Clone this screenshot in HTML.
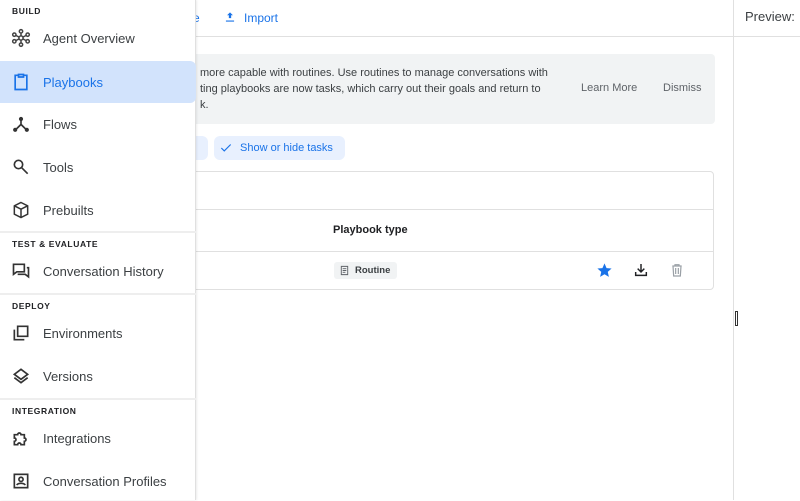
<!DOCTYPE html>
<html><head><style>
*{margin:0;padding:0;box-sizing:border-box}
body{width:800px;height:500px;overflow:hidden;background:#fff;font-family:"Liberation Sans",Arial,sans-serif;position:relative;color:#3c4043}
.abs{position:absolute}
.sb{position:absolute;left:0;top:0;width:196px;height:500px;background:#fff;border-right:1px solid #e0e0e0;box-shadow:1px 0 2px rgba(0,0,0,.08)}
.hd{position:absolute;left:12px;font-size:8.5px;font-weight:bold;letter-spacing:.6px;color:#202124}
.it{position:absolute;left:0;width:196px;height:40px;display:flex;align-items:center}
.it svg{position:absolute;left:11px;width:20px;height:20px}
.it span{position:absolute;left:43px;font-size:13px;color:#3c4043}
.dv{position:absolute;left:0;width:196px;height:2px;background:#eeeeee}
</style></head><body>
<!-- main -->
<div class="abs" style="left:0;top:36px;width:733px;height:1px;background:#e0e0e0"></div>
<div class="abs" style="left:733px;top:0;width:1px;height:500px;background:#e0e0e0"></div>
<div class="abs" style="left:734px;top:36px;width:66px;height:1px;background:#e0e0e0"></div>
<div class="abs" style="left:745px;top:9px;font-size:13px;color:#3c4043">Preview:</div>
<div class="abs" style="left:193px;top:11px;font-size:12px;color:#1a73e8">e</div>
<svg class="abs" style="left:223px;top:10px" width="14" height="14" viewBox="0 0 24 24"><path d="M5 20h14v-2H5zM12 4l-5 5h3v5h4V9h3z" fill="#1a73e8"/></svg>
<div class="abs" style="left:244px;top:11px;font-size:12px;color:#1a73e8">Import</div>
<div class="abs" style="left:190px;top:54px;width:525px;height:70px;background:#f1f3f4;border-radius:4px"></div>
<div class="abs" style="left:200px;top:65px;font-size:11px;line-height:16px;color:#3c4043;width:360px">more capable with routines. Use routines to manage conversations with<br>ting playbooks are now tasks, which carry out their goals and return to<br>k.</div>
<div class="abs" style="left:581px;top:82px;font-size:11px;color:#5f6368">Learn More</div>
<div class="abs" style="left:663px;top:82px;font-size:11px;color:#5f6368">Dismiss</div>
<div class="abs" style="left:190px;top:136px;width:18px;height:24px;background:#e8f0fe;border-radius:6px"></div>
<div class="abs" style="left:214px;top:136px;width:131px;height:24px;background:#e8f0fe;border-radius:6px"></div>
<svg class="abs" style="left:219px;top:141px" width="14" height="14" viewBox="0 0 24 24"><path d="M4 12l5 5L20 6" stroke="#1a73e8" stroke-width="2" fill="none"/></svg>
<div class="abs" style="left:240px;top:142px;font-size:11px;color:#1a73e8">Show or hide tasks</div>
<div class="abs" style="left:185px;top:171px;width:529px;height:119px;border:1px solid #e0e0e0;border-radius:4px"></div>
<div class="abs" style="left:185px;top:209px;width:529px;height:1px;background:#e0e0e0"></div>
<div class="abs" style="left:185px;top:251px;width:529px;height:1px;background:#e0e0e0"></div>
<div class="abs" style="left:333px;top:224px;font-size:11px;font-weight:bold;color:#202124">Playbook type</div>
<div class="abs" style="left:334px;top:262px;width:63px;height:17px;background:#f1f3f4;border-radius:3px"></div>
<svg class="abs" style="left:339px;top:265px" width="11" height="11" viewBox="0 0 24 24"><path d="M5 3h14v18H5zM8 8h8M8 12h8M8 16h6" stroke="#5f6368" stroke-width="2" fill="none"/></svg>
<div class="abs" style="left:355px;top:265px;font-size:9.5px;font-weight:bold;color:#3c4043">Routine</div>
<svg class="abs" style="left:596px;top:262px" width="17" height="17" viewBox="0 0 24 24"><path d="M12 2l2.9 6.6 7.1.6-5.4 4.7 1.6 7.1L12 17.3 5.8 21l1.6-7.1L2 9.2l7.1-.6z" fill="#1a73e8"/></svg>
<svg class="abs" style="left:633px;top:262px" width="16" height="16" viewBox="0 0 24 24"><path d="M12 3v11M7 10l5 5 5-5M4 15v5h16v-5" stroke="#202124" stroke-width="2.2" fill="none"/></svg>
<svg class="abs" style="left:669px;top:262px" width="16" height="16" viewBox="0 0 24 24"><path d="M5 6h14M9 6V4h6v2M6 6l1 15h10l1-15M10 9v9M14 9v9" stroke="#9aa0a6" stroke-width="1.8" fill="none"/></svg>
<div class="abs" style="left:735px;top:311px;width:3px;height:15px;border:1px solid #333"></div>
<!-- sidebar -->
<div class="sb">
<div class="hd" style="top:6px">BUILD</div>
<div class="it" style="top:18px"><svg viewBox="0 0 24 24" fill="none" stroke="#444" stroke-width="1.8"><circle cx="12" cy="12" r="2.5"/><circle cx="12" cy="4" r="2"/><circle cx="12" cy="20" r="2"/><circle cx="4" cy="8" r="2"/><circle cx="20" cy="8" r="2"/><circle cx="4" cy="16" r="2"/><circle cx="20" cy="16" r="2"/><path d="M12 6v4M12 14v4M6 9l4 2M18 9l-4 2M6 15l4-2M18 15l-4-2"/></svg><span>Agent Overview</span></div>
<div class="abs" style="left:0;top:61px;width:196px;height:42px;background:#d2e3fc;border-radius:0 6px 6px 0"></div>
<div class="it" style="top:61px;height:42px"><svg viewBox="0 0 24 24" fill="none" stroke="#1a73e8" stroke-width="2"><path d="M9 4H5v17h14V4h-4M9 3h6v3H9z"/></svg><span style="color:#1a73e8">Playbooks</span></div>
<div class="it" style="top:104px"><svg viewBox="0 0 24 24" fill="#333"><circle cx="12" cy="6" r="2.5"/><circle cx="5" cy="19" r="2.5"/><circle cx="19" cy="19" r="2.5"/><path d="M11 7h2v5l6 6-1.4 1.4L12 14l-5.6 5.4L5 18l6-6z"/></svg><span>Flows</span></div>
<div class="it" style="top:147px"><svg viewBox="0 0 24 24" fill="none" stroke="#333" stroke-width="2"><circle cx="9" cy="9" r="5"/><path d="M12.5 12.5L20 20"/></svg><span>Tools</span></div>
<div class="it" style="top:190px"><svg viewBox="0 0 24 24" fill="none" stroke="#333" stroke-width="1.8"><path d="M12 3l8 4v10l-8 4-8-4V7zM4 7l8 4 8-4M12 11v10"/></svg><span>Prebuilts</span></div>
<div class="dv" style="top:231px"></div>
<div class="hd" style="top:239px">TEST &amp; EVALUATE</div>
<div class="it" style="top:251px"><svg viewBox="0 0 24 24" fill="none" stroke="#333" stroke-width="2"><path d="M3 4h13v9H7l-4 3zM8 16h9l4 3V8h-2"/></svg><span>Conversation History</span></div>
<div class="dv" style="top:293px"></div>
<div class="hd" style="top:301px">DEPLOY</div>
<div class="it" style="top:313px"><svg viewBox="0 0 24 24" fill="none" stroke="#333" stroke-width="2"><path d="M8 4h12v12H8zM4 8v12h12"/></svg><span>Environments</span></div>
<div class="it" style="top:356px"><svg viewBox="0 0 24 24" fill="none" stroke="#333" stroke-width="2"><path d="M12 4l8 6-8 6-8-6zM4 14l8 6 8-6"/></svg><span>Versions</span></div>
<div class="dv" style="top:398px"></div>
<div class="hd" style="top:406px">INTEGRATION</div>
<div class="it" style="top:418px"><svg viewBox="0 0 24 24" fill="none" stroke="#333" stroke-width="2"><path d="M4 8h4a2 2 0 014 0h4v4a2 2 0 010 4v4h-4a2 2 0 00-4 0H4v-4a2 2 0 000-4z"/></svg><span>Integrations</span></div>
<div class="it" style="top:461px"><svg viewBox="0 0 24 24" fill="none" stroke="#333" stroke-width="2"><rect x="4" y="4" width="16" height="16"/><circle cx="12" cy="10" r="2.5"/><path d="M7 17c1-3 9-3 10 0"/></svg><span>Conversation Profiles</span></div>
</div>
</body></html>
